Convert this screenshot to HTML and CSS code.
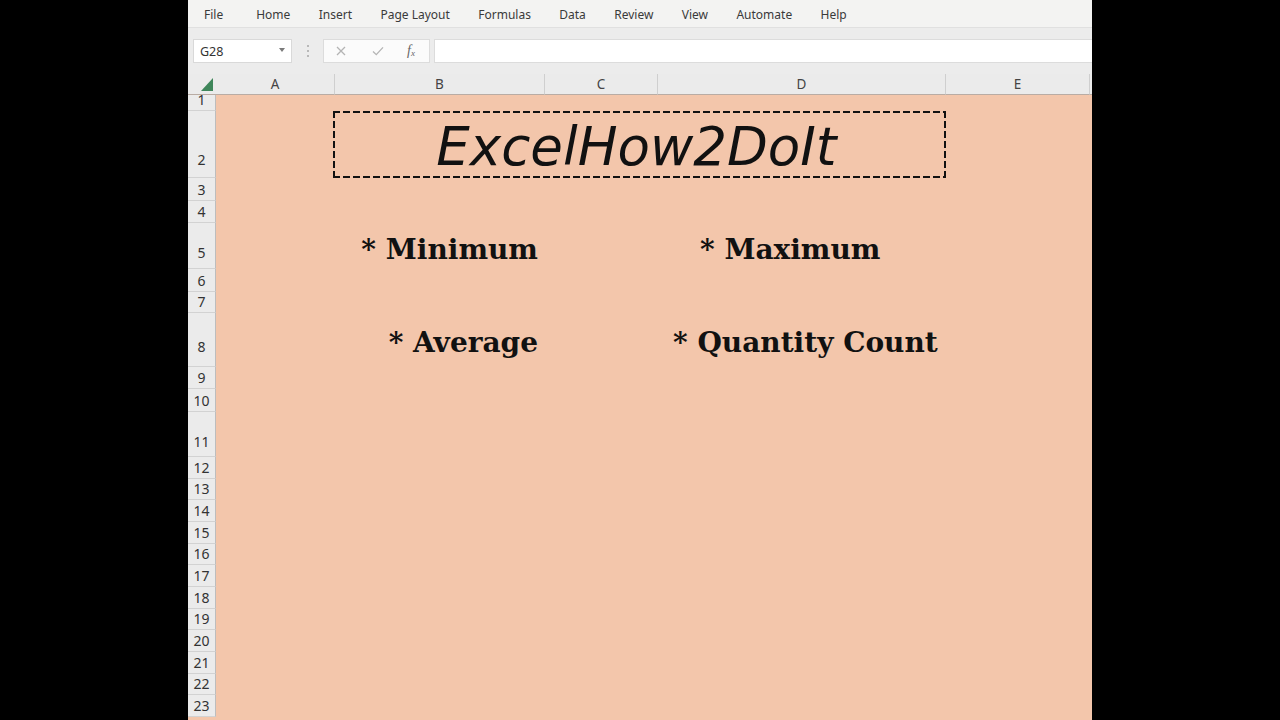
FILE: index.html
```html
<!DOCTYPE html>
<html lang="en">
<head>
<meta charset="utf-8">
<title>ExcelHow2DoIt</title>
<link rel="stylesheet" href="styles.css">
</head>
<body>
<div class="window">
  <nav class="menubar">
    <span class="menu-item">File</span>
    <span class="menu-item">Home</span>
    <span class="menu-item">Insert</span>
    <span class="menu-item">Page Layout</span>
    <span class="menu-item">Formulas</span>
    <span class="menu-item">Data</span>
    <span class="menu-item">Review</span>
    <span class="menu-item">View</span>
    <span class="menu-item">Automate</span>
    <span class="menu-item">Help</span>
  </nav>
  <div class="formulabar">
    <div class="namebox"><span class="ref">G28</span><span class="caret"></span></div>
    <div class="grip"><i></i><i></i><i></i></div>
    <div class="fxbox">
      <svg class="ico-x" width="10" height="10" viewBox="0 0 10 10"><path d="M1 1 L9 9 M9 1 L1 9" stroke="#b4b4b4" stroke-width="1.3" fill="none"/></svg>
      <svg class="ico-check" width="12" height="10" viewBox="0 0 12 10"><path d="M1 5.5 L4.3 8.6 L11 1.4" stroke="#b4b4b4" stroke-width="1.3" fill="none"/></svg>
      <span class="fx">f<sub>x</sub></span>
    </div>
    <div class="input"></div>
  </div>
  <div class="sheet">
    <div class="corner"><span class="selectall"></span></div>
    <div class="colhead">A</div>
    <div class="colhead">B</div>
    <div class="colhead">C</div>
    <div class="colhead">D</div>
    <div class="colhead">E</div>
    <div class="colhead tail"></div>

    <div class="rowhead">1</div>
    <div class="rowhead tall t2">2</div>
    <div class="rowhead">3</div>
    <div class="rowhead">4</div>
    <div class="rowhead tall t5">5</div>
    <div class="rowhead">6</div>
    <div class="rowhead">7</div>
    <div class="rowhead tall t8">8</div>
    <div class="rowhead">9</div>
    <div class="rowhead">10</div>
    <div class="rowhead tall t11">11</div>
    <div class="rowhead">12</div>
    <div class="rowhead">13</div>
    <div class="rowhead">14</div>
    <div class="rowhead">15</div>
    <div class="rowhead">16</div>
    <div class="rowhead">17</div>
    <div class="rowhead">18</div>
    <div class="rowhead">19</div>
    <div class="rowhead">20</div>
    <div class="rowhead">21</div>
    <div class="rowhead">22</div>
    <div class="rowhead">23</div>

    <div class="cell title">ExcelHow2DoIt</div>
    <div class="cell item item-min">* Minimum</div>
    <div class="cell item item-max">* Maximum</div>
    <div class="cell item item-avg">* Average</div>
    <div class="cell item item-qty">* Quantity Count</div>
  </div>
</div>
</body>
</html>
```

FILE: styles.css
```css
html, body {
  margin: 0;
  padding: 0;
}
body {
  background: #000;
  width: 1280px;
  height: 720px;
  overflow: hidden;
}
.window {
  margin-left: 188px;
  width: 904px;
  height: 720px;
  display: flex;
  flex-direction: column;
  overflow: hidden;
  background: #ececec;
  font-family: "Noto Sans", "Open Sans", sans-serif;
  color: #333;
}

/* menu bar */
.menubar {
  flex: none;
  height: 28px;
  box-sizing: border-box;
  display: flex;
  align-items: center;
  gap: 28.4px;
  padding: 1px 0 0 16px;
  font-size: 12px;
  color: #3a3a3a;
  background: #f3f3f2;
  border-bottom: 1px solid #e0e0e0;
}
.menu-item:first-child {
  margin-right: 4.6px;
}

/* formula bar */
.formulabar {
  flex: none;
  height: 46px;
  box-sizing: border-box;
  display: flex;
  align-items: flex-start;
  padding: 11px 0 0 5px;
  background: #ececec;
}
.namebox {
  width: 99px;
  height: 24px;
  box-sizing: border-box;
  display: flex;
  align-items: center;
  justify-content: space-between;
  padding: 0 6px 0 6px;
  background: #fff;
  border: 1px solid #d9d9d9;
  font-size: 12.5px;
  color: #333;
}
.caret {
  width: 0;
  height: 0;
  border-left: 3.5px solid transparent;
  border-right: 3.5px solid transparent;
  border-top: 4px solid #7a7a7a;
  margin-top: -2px;
}
.grip {
  width: 31px;
  height: 24px;
  display: flex;
  flex-direction: column;
  align-items: center;
  justify-content: center;
  gap: 3px;
}
.grip i {
  display: block;
  width: 2px;
  height: 2px;
  background: #b8b8b8;
}
.fxbox {
  width: 107px;
  height: 24px;
  box-sizing: border-box;
  display: flex;
  align-items: center;
  padding-left: 12px;
  background: #fbfbfb;
  border: 1px solid #dcdcdc;
}
.ico-x {
  margin-right: 26px;
}
.ico-check {
  margin-right: 23px;
}
.fx {
  font-family: "Liberation Serif", serif;
  font-style: italic;
  font-size: 14px;
  color: #666;
  line-height: 1;
}
.fx sub {
  font-size: 9px;
  vertical-align: -1px;
}
.input {
  flex: 1;
  height: 24px;
  box-sizing: border-box;
  margin-left: 4px;
  background: #fff;
  border: 1px solid #dcdcdc;
  border-right: none;
}

/* sheet */
.sheet {
  flex: 1;
  display: grid;
  grid-template-columns: 28px 119px 210px 113px 288px 144px 2px;
  grid-template-rows: 21px 16px 67px 23px 22px 46px 23px 21px 54px 22px 23px 45px repeat(12, 21.67px);
  background: #f3c6ab;
}
.corner {
  grid-row: 1;
  grid-column: 1;
  background: #ebebeb;
  border-bottom: 1px solid #b9aca4;
  display: flex;
  align-items: flex-end;
  justify-content: flex-end;
  padding: 0 3px 3px 0;
}
.selectall {
  width: 12px;
  height: 13px;
  background: #3f865a;
  clip-path: polygon(100% 0, 100% 100%, 0 100%);
}
.colhead {
  grid-row: 1;
  background: #ebebeb;
  border-right: 1px solid #cfcfcf;
  border-bottom: 1px solid #b9aca4;
  display: flex;
  align-items: center;
  justify-content: center;
  font-size: 13.5px;
  color: #444;
  line-height: 1;
  padding-top: 2px;
}
.colhead.tail {
  border-right: none;
}
.rowhead {
  grid-column: 1;
  background: #ebebeb;
  border-right: 1px solid #bdbdbd;
  border-bottom: 1px solid #d2d2d2;
  display: flex;
  align-items: flex-end;
  justify-content: center;
  font-size: 14px;
  color: #333;
  line-height: 1;
  padding-bottom: 3px;
}
.rowhead.t2 { padding-bottom: 10px; }
.rowhead.t5 { padding-bottom: 8px; }
.rowhead.t8 { padding-bottom: 12px; }
.rowhead.t11 { padding-bottom: 7px; }

.cell {
  display: flex;
  align-items: flex-end;
  white-space: nowrap;
  color: #111;
}
.title {
  grid-row: 3;
  grid-column: 3 / 6;
  justify-content: center;
  margin-left: -2px;
  padding-right: 6px;
  padding-bottom: 1px;
  font-family: "DejaVu Sans", "Verdana", sans-serif;
  font-style: oblique;
  font-size: 53px;
  line-height: normal;
  background:
    repeating-linear-gradient(90deg, #111 0 7px, transparent 7px 10px) top left / 100% 2px no-repeat,
    repeating-linear-gradient(90deg, #111 0 7px, transparent 7px 10px) bottom left / 100% 2px no-repeat,
    repeating-linear-gradient(180deg, #111 0 7px, transparent 7px 10px) top left / 2px 100% no-repeat,
    repeating-linear-gradient(180deg, #111 0 7px, transparent 7px 10px) top right / 2px 100% no-repeat;
}
.item {
  font-family: "DejaVu Serif", "Liberation Serif", serif;
  font-weight: bold;
  font-size: 28px;
  line-height: normal;
}
.item-min {
  grid-row: 6;
  grid-column: 3;
  justify-content: flex-end;
  padding-right: 7px;
  padding-bottom: 3px;
}
.item-max {
  grid-row: 6;
  grid-column: 5;
  padding-left: 42px;
  padding-bottom: 3px;
}
.item-avg {
  grid-row: 9;
  grid-column: 3;
  justify-content: flex-end;
  padding-right: 7px;
  padding-bottom: 8px;
}
.item-qty {
  grid-row: 9;
  grid-column: 5;
  padding-left: 15px;
  padding-bottom: 8px;
}
```
